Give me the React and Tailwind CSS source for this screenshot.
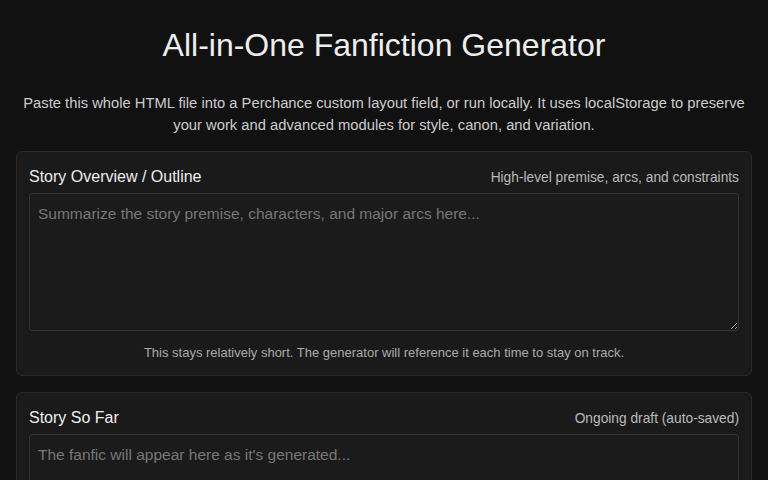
import React, { useState } from "react";

function Panel({ title, hint, placeholder, rows, note, value, onChange }) {
  return (
    <section className="bg-[#1a1a1a] border border-[#2a2a2a] rounded-md px-[12px] pt-[15px] pb-[13px] mb-4">
      <div className="flex items-baseline justify-between mb-[4px]">
        <h2 className="text-[16px] leading-[20px] text-[#eeeeee]">{title}</h2>
        <span className="text-[13.75px] text-[#bbbbbb]">{hint}</span>
      </div>
      <textarea
        value={value}
        onChange={onChange}
        placeholder={placeholder}
        className={`block w-full ${rows} bg-[#1b1b1b] border border-[#333333] rounded-[3px] px-[8px] py-[9px] text-[15.5px] leading-[22px] text-[#dddddd] placeholder:text-[#777777] focus:outline-none`}
      />
      {note && (
        <p className="text-[13px] text-[#aaaaaa] text-center mt-[12px]">{note}</p>
      )}
    </section>
  );
}

export default function App() {
  const [outline, setOutline] = useState("");
  const [story, setStory] = useState("");

  return (
    <div className="min-h-screen bg-[#111111] font-['Liberation_Sans',Arial,sans-serif]">
      <div className="px-4 pt-[26px] pb-8">
        <h1 className="text-[32px] leading-[38px] text-[#eeeeee] text-center">
          All-in-One Fanfiction Generator
        </h1>
        <p className="mt-[28px] text-[14.75px] leading-[22px] text-[#cccccc] text-center px-1">
          Paste this whole HTML file into a Perchance custom layout field, or run locally. It uses localStorage to preserve your work and advanced modules for style, canon, and variation.
        </p>
        <div className="mt-[15px]">
          <Panel
            title="Story Overview / Outline"
            hint="High-level premise, arcs, and constraints"
            placeholder="Summarize the story premise, characters, and major arcs here..."
            rows="h-[138px]"
            note="This stays relatively short. The generator will reference it each time to stay on track."
            value={outline}
            onChange={(e) => setOutline(e.target.value)}
          />
          <Panel
            title="Story So Far"
            hint="Ongoing draft (auto-saved)"
            placeholder="The fanfic will appear here as it's generated..."
            rows="h-[300px]"
            value={story}
            onChange={(e) => setStory(e.target.value)}
          />
        </div>
      </div>
    </div>
  );
}
